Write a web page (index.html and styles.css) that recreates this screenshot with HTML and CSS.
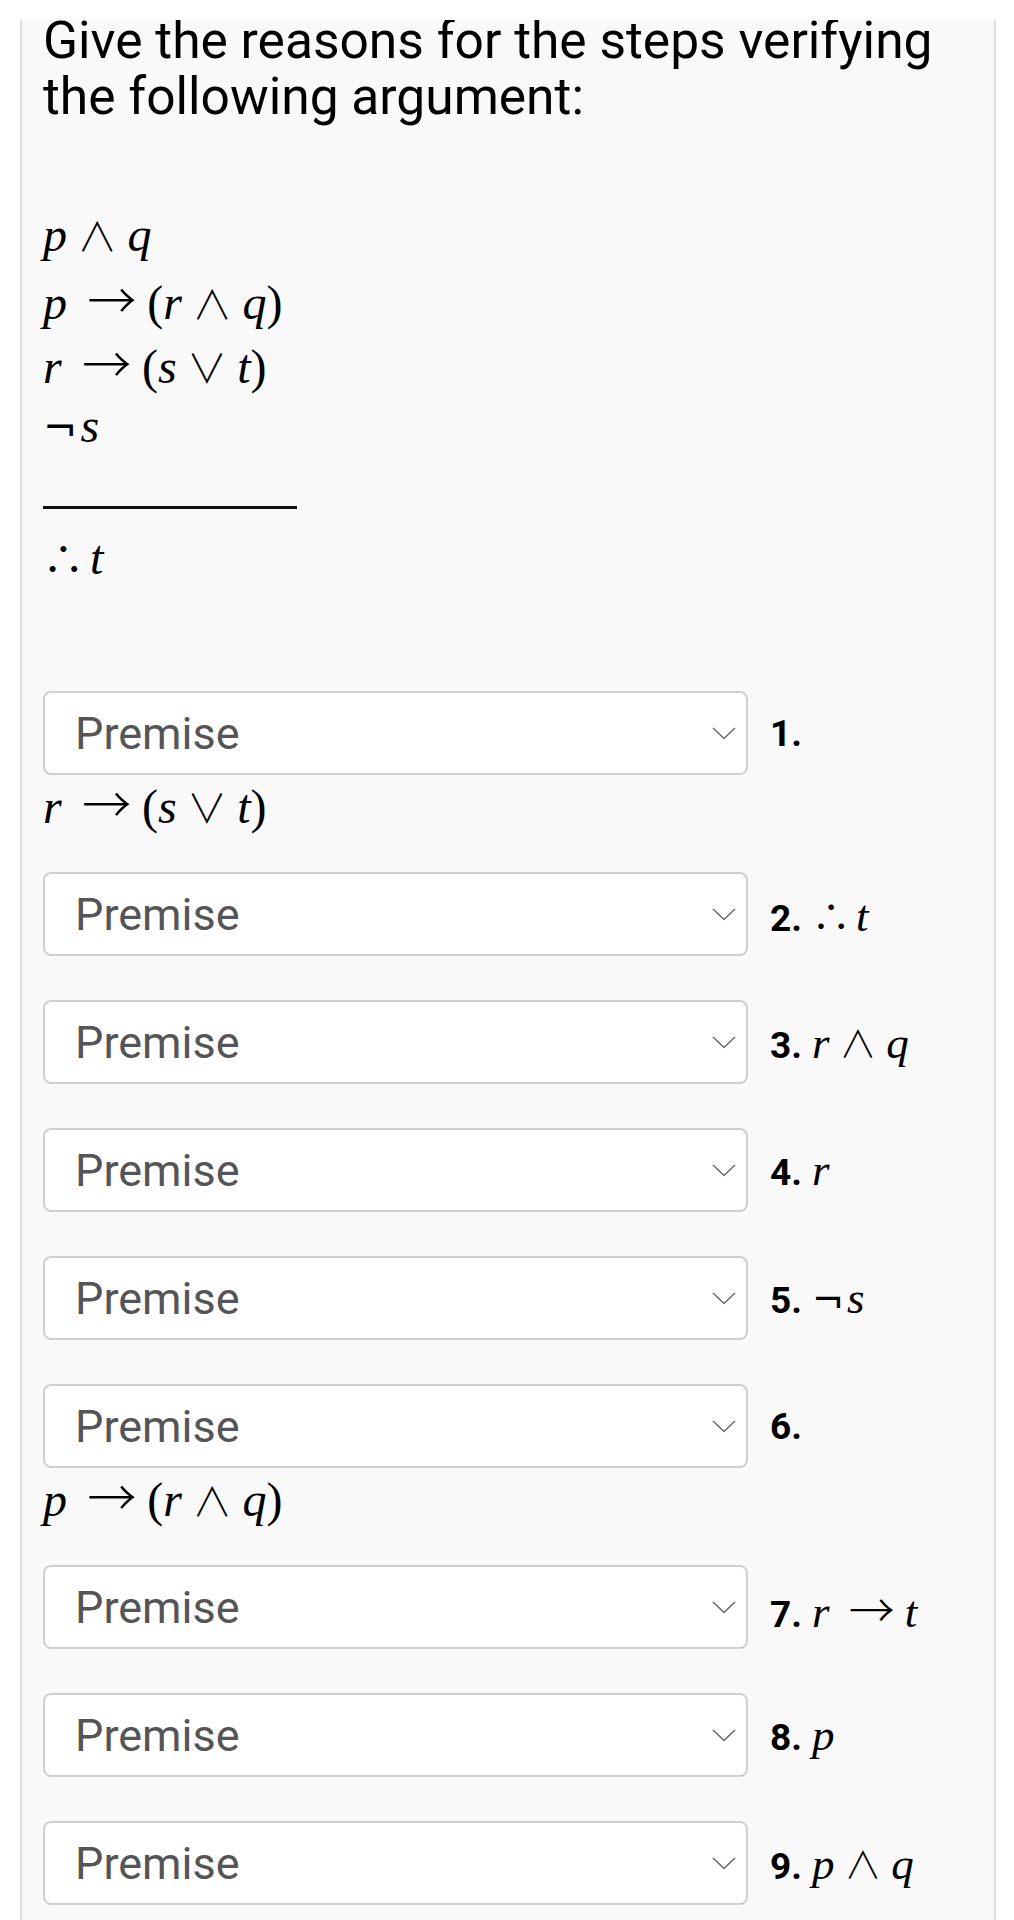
FILE: index.html
```html
<!DOCTYPE html>
<html lang="en">
<head>
    <meta charset="UTF-8">
    <title>Verifying an argument</title>
    <link rel="stylesheet" href="styles.css">
</head>
<body>
    <div class="status-strip"></div>

    <div class="question">
        <h1 class="prompt">Give the reasons for the steps verifying the following argument:</h1>

        <!-- Argument -->
        <div class="argument">
            <div class="line"><i>p</i><span class="op">∧</span><i>q</i></div>
            <div class="line"><i>p</i><span class="op arr">→</span>(<i>r</i><span class="op">∧</span><i>q</i>)</div>
            <div class="line"><i>r</i><span class="op arr">→</span>(<i>s</i><span class="op">∨</span><i>t</i>)</div>
            <div class="line"><span class="neg">¬</span><i>s</i></div>
            <div class="rule"></div>
            <div class="line"><span class="ther">∴</span><i>t</i></div>
        </div>

        <!-- Steps -->
        <div class="steps">
            <div class="step">
                <div class="row">
                    <div class="select"><span>Premise</span><svg width="24" height="13" viewBox="0 0 24 13"><path d="M1 1 L12 11.5 L23 1" fill="none" stroke="#6b6b6b" stroke-width="1.6"/></svg></div>
                    <div class="label"><b>1.</b></div>
                </div>
                <div class="formula"><i>r</i><span class="op arr">→</span>(<i>s</i><span class="op">∨</span><i>t</i>)</div>
            </div>
            <div class="step">
                <div class="row">
                    <div class="select"><span>Premise</span><svg width="24" height="13" viewBox="0 0 24 13"><path d="M1 1 L12 11.5 L23 1" fill="none" stroke="#6b6b6b" stroke-width="1.6"/></svg></div>
                    <div class="label"><b>2.</b><span class="m"><span class="ther">∴</span><i>t</i></span></div>
                </div>
            </div>
            <div class="step">
                <div class="row">
                    <div class="select"><span>Premise</span><svg width="24" height="13" viewBox="0 0 24 13"><path d="M1 1 L12 11.5 L23 1" fill="none" stroke="#6b6b6b" stroke-width="1.6"/></svg></div>
                    <div class="label"><b>3.</b><span class="m"><i>r</i><span class="op">∧</span><i>q</i></span></div>
                </div>
            </div>
            <div class="step">
                <div class="row">
                    <div class="select"><span>Premise</span><svg width="24" height="13" viewBox="0 0 24 13"><path d="M1 1 L12 11.5 L23 1" fill="none" stroke="#6b6b6b" stroke-width="1.6"/></svg></div>
                    <div class="label"><b>4.</b><span class="m"><i>r</i></span></div>
                </div>
            </div>
            <div class="step">
                <div class="row">
                    <div class="select"><span>Premise</span><svg width="24" height="13" viewBox="0 0 24 13"><path d="M1 1 L12 11.5 L23 1" fill="none" stroke="#6b6b6b" stroke-width="1.6"/></svg></div>
                    <div class="label"><b>5.</b><span class="m"><span class="neg">¬</span><i>s</i></span></div>
                </div>
            </div>
            <div class="step">
                <div class="row">
                    <div class="select"><span>Premise</span><svg width="24" height="13" viewBox="0 0 24 13"><path d="M1 1 L12 11.5 L23 1" fill="none" stroke="#6b6b6b" stroke-width="1.6"/></svg></div>
                    <div class="label"><b>6.</b></div>
                </div>
                <div class="formula"><i>p</i><span class="op arr">→</span>(<i>r</i><span class="op">∧</span><i>q</i>)</div>
            </div>
            <div class="step">
                <div class="row">
                    <div class="select"><span>Premise</span><svg width="24" height="13" viewBox="0 0 24 13"><path d="M1 1 L12 11.5 L23 1" fill="none" stroke="#6b6b6b" stroke-width="1.6"/></svg></div>
                    <div class="label"><b>7.</b><span class="m"><i>r</i><span class="op arr">→</span><i>t</i></span></div>
                </div>
            </div>
            <div class="step">
                <div class="row">
                    <div class="select"><span>Premise</span><svg width="24" height="13" viewBox="0 0 24 13"><path d="M1 1 L12 11.5 L23 1" fill="none" stroke="#6b6b6b" stroke-width="1.6"/></svg></div>
                    <div class="label"><b>8.</b><span class="m"><i>p</i></span></div>
                </div>
            </div>
            <div class="step">
                <div class="row">
                    <div class="select"><span>Premise</span><svg width="24" height="13" viewBox="0 0 24 13"><path d="M1 1 L12 11.5 L23 1" fill="none" stroke="#6b6b6b" stroke-width="1.6"/></svg></div>
                    <div class="label"><b>9.</b><span class="m"><i>p</i><span class="op">∧</span><i>q</i></span></div>
                </div>
            </div>
        </div>
    </div>
</body>
</html>
```

FILE: styles.css
```css
body {
    margin: 0;
    background: #ffffff;
    font-family: Roboto, 'Liberation Sans', sans-serif;
    color: #000;
}

/* white strip of the phone status bar over the scrolled page */
.status-strip {
    position: fixed;
    top: 0;
    left: 0;
    right: 0;
    height: 20px;
    background: #ffffff;
    z-index: 2;
}

.question {
    margin: 0 20px 0 20px;
    width: 930px;
    min-height: 1920px;
    padding: 13px 21px 0 21px;
    background: #f9f9f9;
    border-left: 2px solid #dedede;
    border-right: 2px solid #dedede;
}

.prompt {
    margin: 0;
    font-size: 51.5px;
    font-weight: 400;
    line-height: 56px;
}

.argument {
    margin-top: 77px;
    font-family: 'Liberation Serif', 'DejaVu Serif', serif;
    font-size: 48px;
}

.line {
    line-height: 64px;
    height: 64px;
    white-space: nowrap;
}

/* binary operators and arrows: thin glyphs */
.op {
    font-family: 'Noto Sans CJK JP', 'DejaVu Sans', sans-serif;
    font-weight: 300;
    font-size: 0.83em;
    margin: 0 0.26em;
}

.op.arr {
    font-size: 1.02em;
    margin: 0 0.22em 0 0.42em;
}

.neg {
    font-family: 'DejaVu Sans', sans-serif;
    font-weight: 400;
    font-size: 0.85em;
    margin-right: 0.08em;
}

.ther {
    font-family: 'Noto Sans CJK JP', 'DejaVu Sans', sans-serif;
    font-weight: 400;
    font-size: 0.85em;
    margin-right: 0.15em;
}

.rule {
    width: 254px;
    border-top: 3px solid #111;
    margin: 48px 0 16px 0;
}

.steps {
    margin-top: 102px;
}

.step {
    margin-bottom: 44px;
}

.row {
    display: flex;
    align-items: center;
    gap: 22px;
}

.select {
    box-sizing: border-box;
    width: 705px;
    height: 84px;
    display: flex;
    align-items: center;
    justify-content: space-between;
    padding: 0 10px 0 30px;
    background: #ffffff;
    border: 2px solid #cfcfcf;
    border-radius: 8px;
    font-size: 45px;
    color: #555555;
}

.label {
    display: flex;
    align-items: baseline;
    gap: 10px;
    font-size: 37px;
    white-space: nowrap;
}

.label b {
    font-weight: 700;
}

.m {
    font-family: 'Liberation Serif', 'DejaVu Serif', serif;
    font-size: 45px;
}

.formula {
    font-family: 'Liberation Serif', 'DejaVu Serif', serif;
    font-size: 48px;
    line-height: 53px;
    height: 53px;
    white-space: nowrap;
}
```
